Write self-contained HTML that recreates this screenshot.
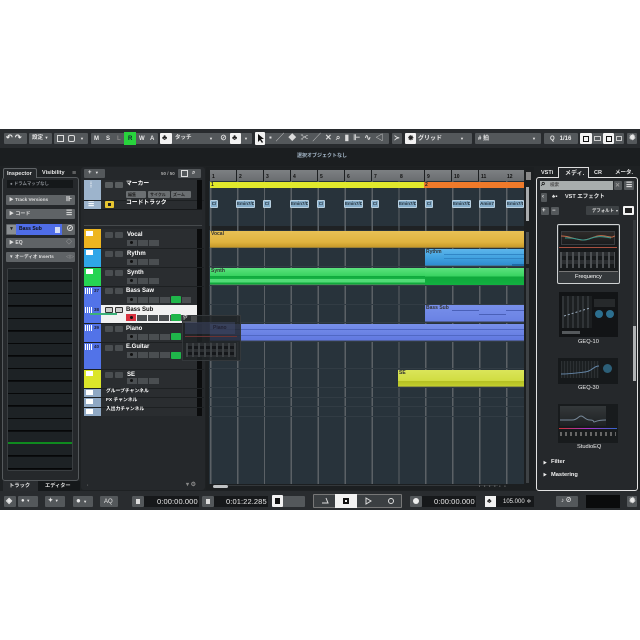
<!DOCTYPE html>
<html><head><meta charset="utf-8">
<style>
html,body{margin:0;padding:0;background:#fff;width:640px;height:640px;overflow:hidden}
body{font-family:"Liberation Sans","Noto Sans CJK JP",sans-serif;color:#e8e8e8;font-size:6px;font-weight:bold;line-height:1}
#p{position:absolute;left:0;top:0;width:640px;height:640px;overflow:hidden;background:#fff;filter:blur(.35px)}
#p div{position:absolute;box-sizing:border-box;white-space:nowrap}
.b{background:#54585b;border-radius:1px}
.w{background:#f2f2f2;border-radius:1px}
.k{background:#3d4144;border-radius:1px}
.g{background:#1fb64a;border-radius:1px}
.i{background:#5f6366;border-radius:1px;color:#ddd;font-size:5px;padding:3px 0 0 3px}
.s{background:#6b6f72;border-radius:1px}
.ev{border-bottom:1px solid #0005}
.ln{height:1px}
.lb{position:absolute;left:1px;top:1px;color:#333;font-size:5px}
.slot{left:8px;width:64px;height:12px;background:#1d2225;border-bottom:1px solid #060708}
.d{background:#1d2022;height:1px;left:84px;width:120px}
.h{background:#323c44;height:1px;left:209px;width:315px}
.cell{width:26px;height:11px;top:170px;background:linear-gradient(#7d8083,#6a6d70);color:#111;font-size:5px;padding:5px 0 0 2px}
.ch{top:200px;height:8px;background:#86aecb;border:1px solid #b9d0e0;color:#23313c;font-size:4.5px;padding-top:1px;text-align:center;border-radius:1px;overflow:hidden}
.tb{width:8px;height:6px;background:#4a4e51;border-radius:1px}
.r{height:6px;background:repeating-linear-gradient(90deg,#4a4e51 0 10px,transparent 10px 11px)}
.dot{width:3px;height:3px;background:#111;border-radius:2px}
.f{width:7px;height:5px;background:#fff;left:86px}
.kb{width:7px;height:6px;left:85px;background:repeating-linear-gradient(90deg,#fff 0 1px,#5273e8 1px 2px)}
.n{font-size:4.5px;color:#223;left:94px}
.nm{color:#fff;font-size:6px}
.lab{font-size:5.7px;font-weight:normal;color:#eee}
.tm{font-size:7.5px;font-weight:normal;letter-spacing:.1px}
</style></head><body><div id="p">
<div style="left:0;top:129px;width:640px;height:381px;background:#1e2123"></div>
<!-- toolbar -->
<div style="left:0;top:129px;width:640px;height:19px;background:#282b2e"></div>
<div class="b" style="left:4px;top:133px;width:23px;height:11px;color:#eee;font-size:8px;padding:1px 0 0 2px">↶ ↷</div>
<div class="b" style="left:29px;top:133px;width:23px;height:11px;padding:3px 0 0 3px;font-size:5.5px">設定 <span style="font-size:4px">▼</span></div>
<div class="b" style="left:54px;top:133px;width:34px;height:11px;padding:2px 0 0 3px;font-size:6px"></div>
<div style="left:57px;top:135px;width:7px;height:7px;border:1px solid #ddd"></div><div style="left:68px;top:135px;width:7px;height:7px;border:1px solid #ddd;border-radius:2px"></div><div style="left:80px;top:137px;font-size:4px">▼</div>
<div class="b" style="left:91px;top:133px;width:67px;height:11px"></div>
<div style="left:94px;top:136px">M</div><div style="left:106px;top:136px">S</div><div style="left:117px;top:136px;color:#888">L</div>
<div style="left:124px;top:132px;width:12px;height:13px;background:#28d33c;color:#123;padding:4px 0 0 4px">R</div>
<div style="left:139px;top:136px">W</div><div style="left:150px;top:136px">A</div>
<div class="b" style="left:160px;top:133px;width:73px;height:11px;padding:3px 0 0 15px;font-size:5.5px">タッチ<div style="left:49px;font-size:4px;top:4px">▼</div><div style="left:60px;top:2px;font-size:7px">⊘</div></div>
<div class="w" style="left:160px;top:133px;width:12px;height:11px;color:#222;font-size:8px;padding:1px 0 0 2px">♣</div>
<div class="b" style="left:230px;top:133px;width:22px;height:11px;font-size:4px;padding:4px 0 0 14px">▼</div>
<div class="w" style="left:230px;top:133px;width:11px;height:11px;color:#222;font-size:8px;padding:1px 0 0 2px">♣</div>
<div class="b" style="left:255px;top:133px;width:134px;height:11px"></div>
<div class="w" style="left:255px;top:132px;width:10px;height:13px"></div>
<svg style="position:absolute;left:257px;top:134px" width="7" height="10"><path d="M1 0V8L3 6 5 9 6 8 4 5H7Z" fill="#111"/></svg>
<div style="left:269px;top:134px;font-size:8px;word-spacing:2px;color:#ddd">▪ ╱ ◆ ✂ ╱ ✕ ⌕ ▮ ⊩ ∿ ◁</div>
<div class="b" style="left:392px;top:133px;width:10px;height:11px;font-size:7px;padding:2px 0 0 2px">≻</div>
<div class="b" style="left:405px;top:133px;width:67px;height:11px;padding:3px 0 0 13px">グリッド<div style="left:55px;font-size:4px;top:4px">▼</div></div>
<div class="w" style="left:405px;top:133px;width:11px;height:11px;color:#222;font-size:9px;padding:1px 0 0 2px">⁕</div>
<div class="b" style="left:475px;top:133px;width:66px;height:11px;padding:3px 0 0 3px"># 拍<div style="left:57px;font-size:4px;top:4px">▼</div></div>
<div class="b" style="left:544px;top:133px;width:34px;height:11px;padding:3px 0 0 6px">Q&nbsp;&nbsp;&nbsp;1/16</div>
<div class="w" style="left:580px;top:133px;width:12px;height:11px"></div><div style="left:583px;top:136px;width:6px;height:6px;border:1px solid #111"></div>
<div class="b" style="left:592px;top:133px;width:11px;height:11px"></div><div style="left:594px;top:136px;width:7px;height:5px;border:1px solid #ccc"></div>
<div class="w" style="left:603px;top:133px;width:11px;height:11px"></div><div style="left:606px;top:136px;width:6px;height:6px;border:1px solid #111"></div>
<div class="b" style="left:614px;top:133px;width:10px;height:11px"></div><div style="left:616px;top:136px;width:6px;height:5px;border:1px solid #ccc"></div>
<div class="b" style="left:627px;top:133px;width:10px;height:11px;font-size:8px;padding:1px 0 0 2px">✹</div>
<!-- info -->
<div style="left:0;top:148px;width:640px;height:18px;background:#1b1e20"></div>
<div style="left:297px;top:154px;font-size:5px;color:#a9bccd">選択オブジェクトなし</div>
<!-- inspector -->
<div style="left:2px;top:177px;width:77px;height:304px;border:1px solid #55595c;border-radius:3px;background:#25282b"></div>
<div style="left:3px;top:168px;width:34px;height:10px;background:#25282b;border:1px solid #5f6366;border-bottom:0;border-radius:2px 2px 0 0;padding:3px 0 0 3px;font-size:5.5px">Inspector</div>
<div style="left:42px;top:171px;font-size:5.5px">Visibility</div><div style="left:72px;top:170px;color:#999;font-size:7px">≡</div>
<div style="left:7px;top:180px;width:66px;height:8px;background:#15181a;color:#8b9096;font-size:4.4px;padding:2px 0 0 3px">● ドラムマップなし</div>
<div class="i" style="left:6px;top:195px;width:69px;height:10px;font-size:4.7px">▶ Track Versions<div style="left:60px;top:1px;font-size:7px">⊪</div></div>
<div class="i" style="left:6px;top:209px;width:69px;height:10px">▶ コード<div style="left:60px;top:1px;font-size:7px">☰</div></div>
<div class="i" style="left:6px;top:224px;width:69px;height:11px"></div>
<div style="left:7px;top:225px;width:9px;height:9px;background:#8a8e91;color:#222;font-size:5px;padding:2px 0 0 2px">▼</div>
<div style="left:16px;top:224px;width:46px;height:11px;background:#4f6de8;color:#111;font-size:5px;padding:3px 0 0 3px">Bass Sub</div>
<div style="left:55px;top:227px;width:5px;height:6px;background:#d5ddf5"></div>
<div style="left:66px;top:225px;color:#ddd;font-size:8px">⊘</div>
<div class="i" style="left:6px;top:238px;width:69px;height:10px">▶ EQ<div style="left:60px;top:2px;color:#aaa;font-size:6px">◇</div></div>
<div class="i" style="left:6px;top:252px;width:69px;height:10px;font-size:4.6px">▼ オーディオ Inserts<div style="left:60px;top:3px;color:#bbb;font-size:4px">◁▷</div></div>
<div style="left:7px;top:268px;width:66px;height:203px;background:#0c0e10;border:1px solid #3a3e41;border-radius:2px"></div>
<div class="slot" style="top:269px"></div><div class="slot" style="top:282px"></div><div class="slot" style="top:294px"></div><div class="slot" style="top:307px"></div><div class="slot" style="top:319px"></div><div class="slot" style="top:332px"></div><div class="slot" style="top:344px"></div><div class="slot" style="top:357px"></div><div class="slot" style="top:369px"></div><div class="slot" style="top:382px"></div><div class="slot" style="top:394px"></div><div class="slot" style="top:407px"></div><div class="slot" style="top:419px"></div><div class="slot" style="top:432px"></div><div class="slot" style="top:444px"></div><div class="slot" style="top:457px"></div>
<div style="left:8px;top:442px;width:64px;height:2px;background:#0f8a1f"></div>
<div style="left:3px;top:481px;width:35px;height:10px;padding:3px 0 0 6px;background:#2a2d30;font-size:5.3px">トラック</div>
<div style="left:38px;top:481px;width:42px;height:10px;padding:3px 0 0 7px;background:#15181a;color:#ddd;font-size:5.2px">エディター</div>
<!-- track list -->
<div style="left:81px;top:167px;width:124px;height:323px;background:#25282b;border-radius:3px"></div>
<div class="b" style="left:84px;top:169px;width:21px;height:9px;font-size:6px;padding:1px 0 0 4px">+&nbsp;&nbsp;<span style="font-size:4px">▼</span></div>
<div style="left:161px;top:172px;font-size:4.5px;color:#aaa">50 / 50</div>
<div class="b" style="left:178px;top:169px;width:23px;height:9px"></div>
<div style="left:181px;top:170px;width:7px;height:7px;border:1px solid #ddd"></div>
<div style="left:192px;top:170px;font-size:6px;color:#ddd">⌕</div>
<div style="left:84px;top:180px;width:118px;height:29px;background:#2a2d30"></div>
<div style="left:84px;top:180px;width:17px;height:29px;background:#9db4cc"></div>
<div style="left:88px;top:183px;font-size:6px;color:#fff">┋</div>
<div style="left:88px;top:201px;font-size:7px;color:#fff">☰</div>
<div class="d" style="top:200px"></div>
<div class="tb" style="left:105px;top:182px;background:#5a5e60"></div><div class="tb" style="left:115px;top:182px;background:#5a5e60"></div>
<div style="left:126px;top:182px;font-size:5.8px;color:#fff">マーカー</div>
<div class="s" style="left:126px;top:191px;width:20px;height:7px;font-size:4px;color:#222;padding:2px 0 0 2px">編集</div>
<div class="s" style="left:148px;top:191px;width:22px;height:7px;font-size:4px;color:#222;padding:2px 0 0 2px">サイクル</div>
<div class="s" style="left:171px;top:191px;width:20px;height:7px;font-size:4px;color:#222;padding:2px 0 0 2px">ズーム</div>
<div style="left:105px;top:201px;width:9px;height:7px;background:#e6c531;border-radius:1px"></div><div style="left:108px;top:203px;width:3px;height:3px;background:#222"></div>
<div style="left:126px;top:201px;font-size:5.8px;color:#fff">コードトラック</div>
<div style="left:84px;top:209px;width:118px;height:17px;background:#26292c;border-top:1px solid #17191b;border-bottom:1px solid #45494c"></div>
<div style="left:197px;top:180px;width:5px;height:29px;background:#0a0b0c"></div>
<!-- tracks -->
<div style="left:84px;top:229px;width:118px;height:187px;background:#2a2d30"></div>
<div style="left:84px;top:229px;width:17px;height:19px;background:#edb51f"></div>
<div style="left:84px;top:248px;width:17px;height:19px;background:#2fa6e8"></div>
<div style="left:84px;top:267px;width:17px;height:19px;background:#26d452"></div>
<div style="left:84px;top:286px;width:17px;height:83px;background:#5273e8"></div>
<div style="left:84px;top:369px;width:17px;height:19px;background:#dbe52a"></div>
<div style="left:84px;top:388px;width:17px;height:28px;background:#8fa8c4"></div>
<div class="f" style="top:231px"></div><div class="f" style="top:250px"></div><div class="f" style="top:269px"></div><div class="f" style="top:371px"></div><div class="f" style="top:390px"></div><div class="f" style="top:399px"></div><div class="f" style="top:409px"></div>
<div class="kb" style="top:288px"></div><div class="kb" style="top:307px"></div><div class="kb" style="top:325px"></div><div class="kb" style="top:344px"></div>
<div class="n" style="top:289px">37</div><div class="n" style="top:308px">38</div><div class="n" style="top:326px">39</div><div class="n" style="top:345px">40</div>
<div style="left:101px;top:305px;width:96px;height:18px;background:#f1f1f1"></div>
<div style="left:90px;top:313px;width:27px;height:2px;background:#3bb07a"></div>
<div style="left:197px;top:229px;width:5px;height:187px;background:#0a0b0c"></div>
<div class="d" style="top:248px"></div><div class="d" style="top:267px"></div><div class="d" style="top:286px"></div><div class="d" style="top:323px"></div><div class="d" style="top:342px"></div><div class="d" style="top:369px"></div><div class="d" style="top:388px"></div><div class="d" style="top:397px"></div><div class="d" style="top:407px"></div>
<!-- names -->
<div class="nm" style="left:127px;top:232px">Vocal</div><div class="nm" style="left:127px;top:251px">Rythm</div><div class="nm" style="left:127px;top:270px">Synth</div><div class="nm" style="left:126px;top:288px">Bass Saw</div><div class="nm" style="left:126px;top:307px;color:#111">Bass Sub</div><div class="nm" style="left:126px;top:326px">Piano</div><div class="nm" style="left:126px;top:344px">E.Guitar</div><div class="nm" style="left:127px;top:372px">SE</div>
<div style="left:106px;top:390px;font-size:4.8px;color:#fff">グループチャンネル</div><div style="left:106px;top:399px;font-size:4.8px;color:#fff">FX チャンネル</div><div style="left:106px;top:408px;font-size:4.8px;color:#fff">入出力チャンネル</div>
<!-- buttons -->
<div class="tb" style="left:105px;top:232px"></div><div class="tb" style="left:115px;top:232px"></div><div class="tb" style="left:105px;top:251px"></div><div class="tb" style="left:115px;top:251px"></div><div class="tb" style="left:105px;top:270px"></div><div class="tb" style="left:115px;top:270px"></div><div class="tb" style="left:105px;top:288px"></div><div class="tb" style="left:115px;top:288px"></div><div class="tb" style="left:105px;top:307px;background:#ccc;border:1px solid #333"></div><div class="tb" style="left:115px;top:307px;background:#ccc;border:1px solid #333"></div><div class="tb" style="left:105px;top:326px"></div><div class="tb" style="left:115px;top:326px"></div><div class="tb" style="left:105px;top:345px"></div><div class="tb" style="left:115px;top:345px"></div><div class="tb" style="left:105px;top:372px"></div><div class="tb" style="left:115px;top:372px"></div>
<div class="r" style="left:127px;top:240px;width:32px"></div><div class="r" style="left:127px;top:259px;width:32px"></div><div class="r" style="left:127px;top:278px;width:32px"></div><div class="r" style="left:127px;top:378px;width:32px"></div>
<div class="r" style="left:127px;top:297px;width:64px"></div><div class="r" style="left:127px;top:334px;width:54px"></div><div class="r" style="left:127px;top:352px;width:54px"></div>
<div class="r" style="left:126px;top:315px;width:65px"></div>
<div style="left:126px;top:314px;width:10px;height:7px;background:#d8313f"></div>
<div class="g" style="left:171px;top:296px;width:10px;height:7px"></div><div class="g" style="left:171px;top:314px;width:10px;height:7px"></div><div class="g" style="left:171px;top:333px;width:10px;height:7px"></div><div class="g" style="left:171px;top:352px;width:10px;height:7px"></div>
<div class="dot" style="left:130px;top:241px"></div><div class="dot" style="left:130px;top:260px"></div><div class="dot" style="left:130px;top:279px"></div><div class="dot" style="left:130px;top:298px"></div><div class="dot" style="left:130px;top:316px"></div><div class="dot" style="left:130px;top:335px"></div><div class="dot" style="left:130px;top:353px"></div><div class="dot" style="left:130px;top:379px"></div>
<div style="left:87px;top:484px;font-size:5px;color:#888">·</div><div style="left:186px;top:482px;font-size:6px;color:#888">▾ ⚙</div>
<!-- arrange -->
<div style="left:206px;top:167px;width:328px;height:323px;background:#1c1f21"></div>
<div style="left:209px;top:181px;width:315px;height:303px;background:#28333b"></div>
<div style="left:209px;top:226px;width:315px;height:4px;background:#1f2224"></div>
<div style="left:210px;top:181px;width:315px;height:303px;background:repeating-linear-gradient(90deg,#5b6166 0 1.4px,transparent 1.4px 26.9px)"></div>
<div class="h" style="top:247px"></div><div class="h" style="top:266px"></div><div class="h" style="top:285px"></div><div class="h" style="top:304px"></div><div class="h" style="top:322px"></div><div class="h" style="top:341px"></div><div class="h" style="top:368px"></div><div class="h" style="top:387px"></div><div class="h" style="top:397px"></div><div class="h" style="top:406px"></div><div class="h" style="top:416px"></div>
<!-- ruler -->
<div style="left:209px;top:168px;width:315px;height:13px;background:#1d2022"></div>
<div class="cell" style="left:210px">1</div><div class="cell" style="left:237px">2</div><div class="cell" style="left:264px">3</div><div class="cell" style="left:291px">4</div><div class="cell" style="left:318px">5</div><div class="cell" style="left:345px">6</div><div class="cell" style="left:372px">7</div><div class="cell" style="left:398px">8</div><div class="cell" style="left:425px">9</div><div class="cell" style="left:452px">10</div><div class="cell" style="left:479px">11</div><div class="cell" style="left:505px;width:19px">12</div>
<div style="left:526px;top:172px;width:5px;height:8px;background:#888"></div>
<div style="left:210px;top:182px;width:214px;height:6px;background:#e2e82c;color:#222;font-size:5px;padding:1px 0 0 1px">1</div>
<div style="left:424px;top:182px;width:100px;height:6px;background:#ef7a2a;color:#222;font-size:5px;padding:1px 0 0 1px">2</div>
<!-- chords -->
<div class="ch" style="left:210px;width:8px">C/</div><div class="ch" style="left:236px;width:19px">Emin7/D</div><div class="ch" style="left:263px;width:8px">C/</div><div class="ch" style="left:290px;width:19px">Emin7/D</div><div class="ch" style="left:317px;width:8px">C/</div><div class="ch" style="left:344px;width:19px">Emin7/D</div><div class="ch" style="left:371px;width:8px">C/</div><div class="ch" style="left:398px;width:19px">Emin7/D</div><div class="ch" style="left:425px;width:8px">C/</div><div class="ch" style="left:452px;width:19px">Emin7/D</div><div class="ch" style="left:479px;width:16px">Amin7</div><div class="ch" style="left:506px;width:18px">Emin7/D</div>
<!-- events -->
<div class="ev" style="left:210px;top:231px;width:314px;height:17px;background:linear-gradient(#e8c155,#e0b33e 70%,#c89a2a)"><span class="lb">Vocal</span></div>
<div class="ev" style="left:425px;top:249px;width:99px;height:17px;background:linear-gradient(#5cb6ec,#3f9fde 60%,#2f8cd0)"><span class="lb">Rythm</span><div class="ln" style="left:19px;top:5px;width:80px;background:#3186c6"></div><div class="ln" style="left:19px;top:9px;width:80px;background:#3186c6"></div><div style="left:87px;top:15px;width:12px;height:2px;background:#1f6aa5"></div></div>
<div class="ev" style="left:210px;top:268px;width:314px;height:17px;background:linear-gradient(#5ce27e,#37d25f 50%,#0fa83c 50%,#17b546 70%,#52dc77 70%,#52dc77 90%,#11a83d 90%)"><span class="lb">Synth</span><div style="left:215px;top:0;width:99px;height:17px;background:linear-gradient(#5ce27e,#37d25f 50%,#0fa83c 50%,#12b040)"></div></div>
<div class="ev" style="left:425px;top:305px;width:99px;height:17px;background:linear-gradient(#7890ea,#6a82e4)"><span class="lb">Bass Sub</span><div class="ln" style="left:27px;top:5px;width:27px;background:#4a60b8"></div><div class="ln" style="left:54px;top:9px;width:27px;background:#4a60b8"></div><div class="ln" style="left:81px;top:5px;width:18px;background:#4a60b8"></div></div>
<div class="ev" style="left:210px;top:324px;width:314px;height:17px;background:linear-gradient(#7890ea,#6179e0)"><div class="ln" style="left:0;top:5px;width:314px;background:#5068c4"></div><div class="ln" style="left:0;top:11px;width:314px;background:#5068c4"></div></div>
<div class="ev" style="left:398px;top:370px;width:126px;height:17px;background:linear-gradient(#dbe55a,#cfdc40 70%,#b4c022 70%,#c3cf2e)"><span class="lb">SE</span></div>
<!-- ghost -->
<div style="left:182px;top:315px;width:59px;height:46px;background:rgba(32,35,38,.82);border:1px solid #34383b"></div>
<div style="left:185px;top:322px;width:50px;height:12px;background:rgba(70,80,120,.4)"></div>
<div style="left:213px;top:326px;font-size:5px;color:#223">Piano</div>
<div style="left:185px;top:336px;width:52px;height:1px;background:#6a3333"></div>
<div style="left:186px;top:343px;width:50px;height:14px;background:repeating-linear-gradient(90deg,#3e4245 0 2px,transparent 2px 6px),repeating-linear-gradient(#2b2e31 0 3px,#15171a 3px 6px)"></div>
<div style="left:181px;top:313px;font-size:8px;color:#eee">☟</div>
<!-- scrollbars -->
<div style="left:526px;top:187px;width:3px;height:34px;background:#a8abad"></div>
<div style="left:526px;top:232px;width:3px;height:32px;background:#4a4e51"></div>
<div style="left:526px;top:268px;width:3px;height:215px;background:#3e4245"></div>
<div style="left:213px;top:485px;width:15px;height:3px;background:#bfc2c4;border-radius:2px"></div>
<div style="left:228px;top:485px;width:270px;height:1px;background:#34383b"></div>
<div style="left:479px;top:485px;font-size:3px;color:#ccc;letter-spacing:4px">▪▪▪▪▪▪</div>
<!-- right -->
<div style="left:536px;top:177px;width:102px;height:314px;background:#25282b;border:1px solid #e3e3e3;border-radius:3px"></div>
<div style="left:541px;top:171px;font-size:5.5px">VSTi</div>
<div style="left:558px;top:167px;width:31px;height:11px;background:#25282b;border:1px solid #ddd;border-bottom:0;padding:3px 0 0 6px">メディ.</div>
<div style="left:594px;top:171px;font-size:5.5px">CR</div><div style="left:615px;top:171px;font-size:5.5px">メータ.</div>
<div style="left:540px;top:181px;width:73px;height:9px;background:#a8adad;color:#555;font-size:4.5px;padding:2px 0 0 10px">検索</div>
<div style="left:541px;top:180px;font-size:8px;color:#111">⌕</div>
<div class="b" style="left:614px;top:181px;width:8px;height:9px;font-size:6px;padding:2px 0 0 1px;color:#999">✕</div>
<div class="b" style="left:624px;top:181px;width:10px;height:9px;font-size:7px;padding:1px 0 0 2px">☰</div>
<div class="b" style="left:541px;top:193px;width:6px;height:9px;font-size:6px;padding:1px 0 0 1px">‹</div>
<div style="left:552px;top:194px;font-size:6px">♠▪</div><div style="left:565px;top:195px;font-size:5.5px">VST エフェクト</div>
<div class="b" style="left:541px;top:207px;width:8px;height:8px;font-size:6px;padding:1px 0 0 1px">+</div><div class="b" style="left:551px;top:207px;width:8px;height:8px;font-size:6px;padding:1px 0 0 1px">−</div>
<div class="k" style="left:586px;top:206px;width:33px;height:9px;font-size:4.4px;padding:3px 0 0 6px;color:#ddd">デフォルト <span style="font-size:3.5px">▼</span></div>
<div class="w" style="left:623px;top:206px;width:11px;height:9px"></div><div style="left:625px;top:208px;width:7px;height:5px;background:#222"></div>
<div style="left:633px;top:220px;width:3px;height:145px;background:#33373a"></div>
<div style="left:633px;top:326px;width:3px;height:55px;background:#aeb1b3"></div>
<!-- Frequency -->
<div style="left:557px;top:224px;width:63px;height:60px;background:#34383b;border:1px solid #cfd2d3;border-radius:2px"></div>
<div style="left:559px;top:226px;width:59px;height:46px;background:#16191b;border-bottom:1px solid #777"></div>
<div style="left:561px;top:231px;width:54px;height:14px;background:linear-gradient(#2e2a28,#1a1c1e);border:1px solid #3a3d40"></div>
<svg style="position:absolute;left:561px;top:231px" width="54" height="14"><path d="M0 5C10 5 14 9 22 9S34 3 44 5 50 6 54 5" stroke="#c46b4a" fill="none"/><path d="M4 7C14 6 20 11 28 8S40 5 50 7" stroke="#3a9a8e" fill="none"/></svg>
<div style="left:559px;top:247px;width:58px;height:1px;background:#a8503f"></div>
<div style="left:560px;top:252px;width:55px;height:16px;background:repeating-linear-gradient(90deg,#4c5053 0 2px,transparent 2px 6px),repeating-linear-gradient(#2a2d30 0 4px,#16191b 4px 8px)"></div>
<div class="lab" style="left:575px;top:275px;color:#fff">Frequency</div>
<!-- GEQ-10 -->
<div style="left:559px;top:292px;width:59px;height:45px;background:#121416"></div>
<div style="left:562px;top:296px;width:30px;height:32px;background:repeating-linear-gradient(90deg,#303437 0 2px,#1c1f21 2px 5px)"></div>
<svg style="position:absolute;left:562px;top:296px" width="30" height="32"><path d="M2 20L28 12" stroke="#9ab" stroke-dasharray="2 2" fill="none"/></svg>
<div style="left:594px;top:299px;width:21px;height:8px;background:#26292b"></div>
<div style="left:595px;top:310px;width:8px;height:8px;border-radius:50%;background:#2c6f8f"></div><div style="left:606px;top:310px;width:8px;height:8px;border-radius:50%;background:#2c6f8f"></div>
<div style="left:562px;top:331px;width:18px;height:3px;background:#55595c"></div>
<div class="lab" style="left:578px;top:340px">GEQ-10</div>
<!-- GEQ-30 -->
<div style="left:558px;top:358px;width:60px;height:26px;background:#16191b"></div>
<div style="left:561px;top:361px;width:38px;height:17px;background:repeating-linear-gradient(90deg,#2c3033 0 1px,#1c2022 1px 3px)"></div>
<svg style="position:absolute;left:561px;top:361px" width="38" height="17"><path d="M0 13C10 13 16 12 24 11S32 5 38 5" stroke="#68a" fill="none"/></svg>
<div style="left:603px;top:364px;width:9px;height:9px;border-radius:50%;background:#2c5f78"></div>
<div class="lab" style="left:578px;top:386px">GEQ-30</div>
<!-- StudioEQ -->
<div style="left:558px;top:404px;width:60px;height:39px;background:#181b1d"></div>
<div style="left:560px;top:406px;width:46px;height:20px;background:linear-gradient(#34383a,#1e2123)"></div>
<svg style="position:absolute;left:560px;top:406px" width="46" height="20"><path d="M0 14H12C18 14 18 10 21 10S25 14 30 14 33 16 34 16 37 14 46 14" stroke="#789" fill="none"/></svg>
<div style="left:559px;top:428px;width:58px;height:1px;background:linear-gradient(90deg,#c33,#a3c 50%,#36c)"></div>
<div style="left:560px;top:432px;width:56px;height:4px;background:repeating-linear-gradient(90deg,#666 0 2px,transparent 2px 5px)"></div>
<div class="lab" style="left:577px;top:445px">StudioEQ</div>
<div style="left:543px;top:461px;font-size:4px;color:#eee">▶</div><div style="left:551px;top:460px;font-size:5.7px;color:#eee">Filter</div>
<div style="left:543px;top:473px;font-size:4px;color:#eee">▶</div><div style="left:551px;top:473px;font-size:5.7px;color:#eee">Mastering</div>
<!-- transport -->
<div style="left:0;top:491px;width:640px;height:19px;background:#292c2f"></div>
<div class="b" style="left:4px;top:496px;width:12px;height:11px;font-size:8px;padding:1px 0 0 2px">◈</div>
<div class="b" style="left:18px;top:496px;width:20px;height:11px;padding:2px 0 0 3px">● <span style="font-size:4px">▼</span></div>
<div class="b" style="left:45px;top:496px;width:20px;height:11px;padding:2px 0 0 3px">✦ <span style="font-size:4px">▼</span></div>
<div class="b" style="left:73px;top:496px;width:20px;height:11px;padding:1px 0 0 3px;font-size:8px">● <span style="font-size:4px">▼</span></div>
<div class="b" style="left:100px;top:496px;width:18px;height:11px;padding:3px 0 0 4px;font-weight:normal">AQ</div>
<div style="left:132px;top:496px;width:67px;height:11px;background:#16181a"></div><div class="b" style="left:132px;top:496px;width:12px;height:11px"></div><div style="left:136px;top:499px;width:4px;height:5px;background:#ddd"></div>
<div class="tm" style="left:157px;top:498px">0:00:00.000</div>
<div style="left:202px;top:496px;width:66px;height:11px;background:#16181a"></div><div class="b" style="left:202px;top:496px;width:12px;height:11px"></div><div style="left:206px;top:499px;width:4px;height:5px;background:#ddd"></div>
<div class="tm" style="left:226px;top:498px">0:01:22.285</div>
<div class="b" style="left:272px;top:496px;width:33px;height:11px"></div><div class="w" style="left:272px;top:495px;width:11px;height:12px"></div><div style="left:275px;top:498px;width:5px;height:6px;background:#111"></div>
<div class="b" style="left:313px;top:494px;width:89px;height:14px;background:#3b3f42;border:1px solid #777"></div>
<div class="w" style="left:335px;top:494px;width:22px;height:14px;border-radius:0"></div>
<div style="left:343px;top:498px;width:6px;height:6px;border:2px solid #111"></div>
<svg style="position:absolute;left:320px;top:496px" width="10" height="10"><path d="M2 7H8L6 2" stroke="#ddd" fill="none"/></svg>
<svg style="position:absolute;left:365px;top:497px" width="8" height="8"><path d="M1 1L6 4 1 7Z" stroke="#ddd" fill="none"/></svg>
<div style="left:388px;top:498px;width:6px;height:6px;border:1px solid #ddd;border-radius:50%"></div>
<div class="b" style="left:410px;top:496px;width:12px;height:11px"></div><div style="left:413px;top:498px;width:6px;height:6px;background:#eee;border-radius:50%"></div>
<div style="left:422px;top:496px;width:54px;height:11px;background:#16181a"></div>
<div class="tm" style="left:434px;top:498px">0:00:00.000</div>
<div style="left:485px;top:496px;width:11px;height:11px;background:#f2f2f2;color:#222;font-size:7px;padding:2px 0 0 2px">♣</div>
<div style="left:496px;top:496px;width:38px;height:11px;background:#16181a;font-size:6px;font-weight:normal;padding:3px 0 0 7px">105.000 ≑</div>
<div class="b" style="left:556px;top:496px;width:22px;height:11px;padding:2px 0 0 5px">♪ ⊘</div>
<div style="left:586px;top:495px;width:34px;height:13px;background:#0a0b0c"></div>
<div class="b" style="left:627px;top:496px;width:10px;height:11px;font-size:8px;padding:1px 0 0 2px">✹</div>
</div></body></html>
